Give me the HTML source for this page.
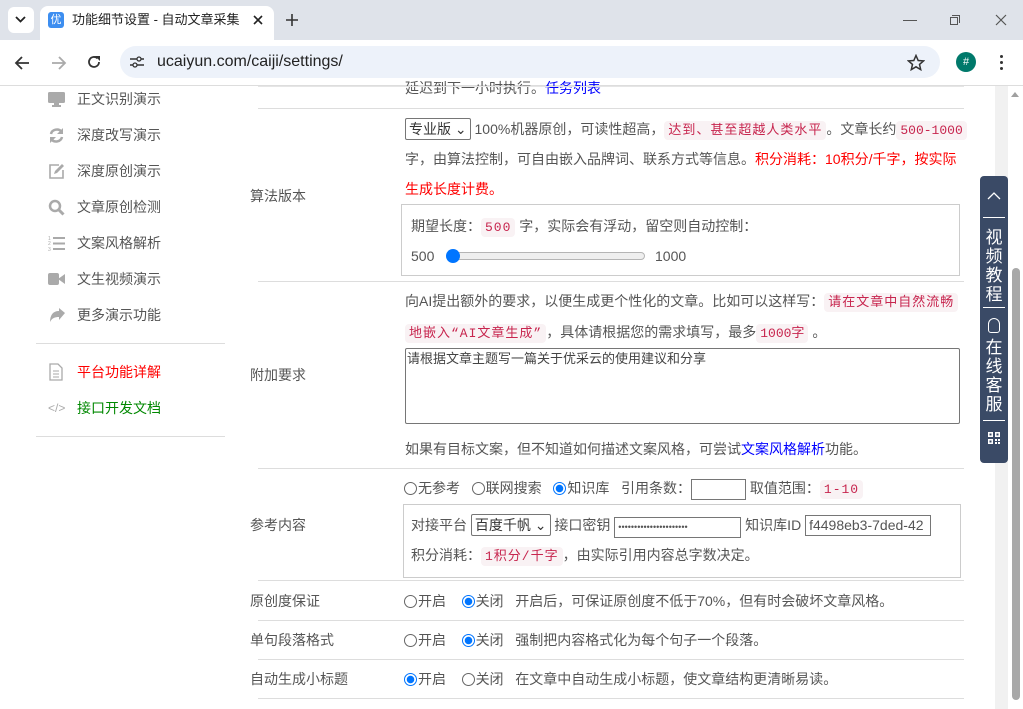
<!DOCTYPE html>
<html><head><meta charset="utf-8"><style>
*{margin:0;padding:0;box-sizing:border-box}
body{width:1023px;height:709px;overflow:hidden;position:relative;font-family:"Liberation Sans","Noto Sans CJK SC",sans-serif;font-size:14px;color:#555;background:#fff}
.abs{position:absolute}
.tabbar{left:0;top:0;width:1023px;height:40px;background:#dfe3ea}
.tab{left:40px;top:6px;width:234px;height:34px;background:#fff;border-radius:8px 8px 0 0}
.toolbar{left:0;top:40px;width:1023px;height:46px;background:#fff;border-bottom:1px solid #ddd}
.url{left:120px;top:46px;width:820px;height:32px;background:#edf2fa;border-radius:16px}
.t{white-space:nowrap;line-height:20px}
.code{background:#f9f2f4;color:#c7254e;font-family:"Liberation Mono","Noto Sans CJK SC",monospace;font-size:13px;padding:2px 4px;border-radius:4px;letter-spacing:1px}
.hr{height:1px;background:#ddd}
.side{left:77px;color:#555}
.ic{left:48px;width:17px;height:17px}
.radio{display:inline-block;width:13px;height:13px;border:1px solid #666;border-radius:50%;vertical-align:-2px;margin-right:1px}
.radio.on{border:1px solid #0075ff;background:radial-gradient(circle,#0075ff 0 3.5px,#fff 4px)}
.box{border:1px solid #ccc}
input.in{border:1px solid #767676;height:21px;font-size:14px;font-family:inherit;padding:0 3px;color:#555}
.sel{display:inline-block;border:1px solid #767676;border-radius:2px;height:22px;line-height:20px;padding:0 3px;color:#333}
</style></head><body>
<div class="abs tabbar"></div>
<div class="abs" style="left:8px;top:7px;width:26px;height:26px;background:#fff;border-radius:6px"></div>
<svg class="abs" style="left:15px;top:16px" width="11" height="8"><path d="M1 1l4.5 4.5L10 1" stroke="#222" stroke-width="1.8" fill="none"/></svg>
<div class="abs tab"></div>
<div class="abs" style="left:48px;top:12px;width:16px;height:16px;background:#3d8ef0;border-radius:3px;color:#fff;font-size:11px;line-height:16px;text-align:center">优</div>
<div class="abs t" style="left:72px;top:10px;font-size:13px;color:#222;width:168px;overflow:hidden">功能细节设置 - 自动文章采集器</div>
<svg class="abs" style="left:253px;top:15px" width="10" height="10"><path d="M1 1l8 8M9 1l-8 8" stroke="#222" stroke-width="1.6"/></svg>
<svg class="abs" style="left:286px;top:14px" width="12" height="12"><path d="M6 0v12M0 6h12" stroke="#333" stroke-width="1.6"/></svg>
<div class="abs" style="left:903px;top:20px;width:14px;height:1px;background:#555"></div>
<div class="abs" style="left:950px;top:17px;width:8px;height:8px;border:1px solid #555"></div>
<div class="abs" style="left:952px;top:15px;width:8px;height:8px;border-top:1px solid #555;border-right:1px solid #555"></div>
<svg class="abs" style="left:995px;top:14px" width="12" height="12"><path d="M1 1l10 10M11 1L1 11" stroke="#555" stroke-width="1.2"/></svg>
<div class="abs toolbar"></div>
<svg class="abs" style="left:14px;top:55px" width="16" height="16"><path d="M15 8H2M8 2L2 8l6 6" stroke="#333" stroke-width="1.8" fill="none"/></svg>
<svg class="abs" style="left:51px;top:55px" width="16" height="16"><path d="M1 8h13M8 2l6 6-6 6" stroke="#aaa" stroke-width="1.8" fill="none"/></svg>
<svg class="abs" style="left:86px;top:54px" width="16" height="16"><path d="M13 8a5 5 0 1 1-1.5-3.6" stroke="#333" stroke-width="1.8" fill="none"/><path d="M9 2h5v5z" fill="#333"/></svg>
<div class="abs url"></div>
<svg class="abs" style="left:129px;top:55px" width="16" height="14"><path d="M1 4h7M12 4h3M1 10h3M8 10h7" stroke="#333" stroke-width="1.5"/><circle cx="10" cy="4" r="2" fill="none" stroke="#333" stroke-width="1.3"/><circle cx="6" cy="10" r="2" fill="none" stroke="#333" stroke-width="1.3"/></svg>
<div class="abs t" style="left:157px;top:52px;font-size:16px;color:#222">ucaiyun.com/caiji/settings/</div>
<svg class="abs" style="left:907px;top:54px" width="18" height="17"><path d="M9 1.5l2.2 5 5.3.4-4 3.5 1.2 5.2L9 12.8l-4.7 2.8 1.2-5.2-4-3.5 5.3-.4z" fill="none" stroke="#333" stroke-width="1.5"/></svg>
<div class="abs" style="left:956px;top:52px;width:20px;height:20px;border-radius:50%;background:#00796b;color:#fff;font-size:11px;text-align:center;line-height:20px">#</div>
<div class="abs" style="left:1000px;top:55px;width:3px;height:3px;border-radius:50%;background:#333;box-shadow:0 6px #333,0 12px #333"></div>

<!-- side -->
<div class="abs" style="left:995px;top:86px;width:13px;height:623px;background:#f1f1f1"></div>
<div class="abs" style="left:1008px;top:86px;width:15px;height:623px;background:#fff"></div>
<div class="abs" style="left:1012px;top:268px;width:8px;height:432px;background:#a8a8a8;border-radius:4px"></div>
<div class="abs" style="left:1011px;top:92px;border-bottom:5px solid #a0a0a0;border-left:4px solid transparent;border-right:4px solid transparent"></div>

<svg class="abs ic" style="top:91px"><rect x="0" y="1" width="17" height="11" rx="1.5" fill="#aaa"/><rect x="6" y="12" width="5" height="2" fill="#aaa"/><rect x="4" y="14" width="9" height="2" fill="#aaa"/></svg><div class="abs t side" style="top:89px">正文识别演示</div>
<svg class="abs ic" style="top:127px"><path d="M3 7a6 5.5 0 0 1 10.5-2.5M14 10a6 5.5 0 0 1-10.5 2.5" stroke="#aaa" stroke-width="2.5" fill="none"/><path d="M15 1v6h-6zM2 16v-6h6z" fill="#aaa"/></svg><div class="abs t side" style="top:125px">深度改写演示</div>
<svg class="abs ic" style="top:163px"><path d="M11 2H2v13h13V7" stroke="#aaa" stroke-width="1.6" fill="none"/><path d="M14 1l2 2-7 7-3 1 1-3z" fill="#aaa"/></svg><div class="abs t side" style="top:161px">深度原创演示</div>
<svg class="abs ic" style="top:199px"><circle cx="7" cy="7" r="5" stroke="#aaa" stroke-width="2.5" fill="none"/><path d="M10.5 10.5l5 5" stroke="#aaa" stroke-width="3"/></svg><div class="abs t side" style="top:197px">文章原创检测</div>
<svg class="abs ic" style="top:235px"><path d="M5 3h12M5 8.5h12M5 14h12" stroke="#aaa" stroke-width="2"/><text x="0" y="5" font-size="5" fill="#aaa">1</text><text x="0" y="10" font-size="5" fill="#aaa">2</text><text x="0" y="16" font-size="5" fill="#aaa">3</text></svg><div class="abs t side" style="top:233px">文案风格解析</div>
<svg class="abs ic" style="top:271px"><rect x="0" y="2" width="11" height="12" rx="2" fill="#aaa"/><path d="M10 8l7-5v10z" fill="#aaa"/></svg><div class="abs t side" style="top:269px">文生视频演示</div>
<svg class="abs ic" style="top:307px"><path d="M17 6l-6-5v3C5 4 2 8 2 15c2-4 5-5 9-5v3z" fill="#aaa"/></svg><div class="abs t side" style="top:305px">更多演示功能</div>
<div class="abs hr" style="left:36px;top:343px;width:189px"></div>
<svg class="abs ic" style="top:363px;height:18px"><path d="M2 1h8l4 4v12H2z" stroke="#aaa" stroke-width="1.3" fill="none"/><path d="M5 8h6M5 11h6M5 14h6" stroke="#aaa"/></svg><div class="abs t side" style="top:362px;color:#f00">平台功能详解</div>
<div class="abs t" style="left:48px;top:398px;font-size:12px;color:#aaa">&lt;/&gt;</div><div class="abs t side" style="top:398px;color:#080">接口开发文档</div>
<div class="abs hr" style="left:36px;top:436px;width:189px"></div>

<!-- main -->
<div class="abs t" style="left:405px;top:78px">延迟到下一小时执行。<span style="color:#00f">任务列表</span></div>
<div class="abs hr" style="left:258px;top:86px;width:706px;background:#e5e5e5"></div>
<div class="abs hr" style="left:258px;top:108px;width:706px"></div>
<div class="abs t" style="left:250px;top:186px">算法版本</div>
<div class="abs t" style="left:405px;top:118px"><span class="sel">专业版 ⌄</span> 100%机器原创，可读性超高，<span class="code">达到、甚至超越人类水平</span>。文章长约<span class="code" style="letter-spacing:0">500-1000</span></div>
<div class="abs t" style="left:405px;top:149px">字，由算法控制，可自由嵌入品牌词、联系方式等信息。<span style="color:#f00">积分消耗：10积分/千字，按实际</span></div>
<div class="abs t" style="left:405px;top:179px;color:#f00">生成长度计费。</div>
<div class="abs box" style="left:401px;top:204px;width:559px;height:72px"></div>
<div class="abs t" style="left:411px;top:216px">期望长度：<span class="code">500</span> 字，实际会有浮动，留空则自动控制：</div>
<div class="abs t" style="left:411px;top:246px">500</div>
<div class="abs" style="left:447px;top:252px;width:198px;height:8px;border:1px solid #b5b5b5;background:#efefef;border-radius:4px"></div>
<div class="abs" style="left:446px;top:249px;width:14px;height:14px;background:#0075ff;border-radius:50%"></div>
<div class="abs t" style="left:655px;top:246px">1000</div>
<div class="abs hr" style="left:258px;top:281px;width:706px"></div>

<div class="abs t" style="left:250px;top:365px">附加要求</div>
<div class="abs t" style="left:405px;top:291px">向AI提出额外的要求，以便生成更个性化的文章。比如可以这样写：<span class="code">请在文章中自然流畅</span></div>
<div class="abs t" style="left:405px;top:322px"><span class="code">地嵌入“AI文章生成”</span>，具体请根据您的需求填写，最多<span class="code" style="letter-spacing:0">1000字</span> 。</div>
<div class="abs" style="left:405px;top:348px;width:555px;height:76px;border:1px solid #767676;border-radius:2px"></div>
<div class="abs t" style="left:407px;top:349px;font-size:13px;color:#444">请根据文章主题写一篇关于优采云的使用建议和分享</div>
<div class="abs t" style="left:405px;top:439px">如果有目标文案，但不知道如何描述文案风格，可尝试<span style="color:#00f">文案风格解析</span>功能。</div>
<div class="abs hr" style="left:258px;top:468px;width:706px"></div>

<div class="abs t" style="left:250px;top:515px">参考内容</div>
<div class="abs t" style="left:404px;top:478px"><span class="radio"></span>无参考 &nbsp;&nbsp;<span class="radio"></span>联网搜索 &nbsp;&nbsp;<span class="radio on"></span>知识库 &nbsp;&nbsp;引用条数：<input class="in" style="width:55px;vertical-align:-1px"> 取值范围：<span class="code">1-10</span></div>
<div class="abs box" style="left:403px;top:504px;width:558px;height:74px"></div>
<div class="abs t" style="left:411px;top:514px">对接平台 <span class="sel">百度千帆 ⌄</span> 接口密钥 <input class="in" value="••••••••••••••••••••••" style="width:127px;font-size:9px"> 知识库ID <input class="in" value="f4498eb3-7ded-42" style="width:126px"></div>
<div class="abs t" style="left:411px;top:545px">积分消耗：<span class="code">1积分/千字</span>，由实际引用内容总字数决定。</div>
<div class="abs hr" style="left:258px;top:580px;width:706px"></div>

<div class="abs t" style="left:250px;top:591px">原创度保证</div>
<div class="abs t" style="left:404px;top:591px"><span class="radio"></span>开启 &nbsp;&nbsp;&nbsp;<span class="radio on"></span>关闭 &nbsp;&nbsp;开启后，可保证原创度不低于70%，但有时会破坏文章风格。</div>
<div class="abs hr" style="left:258px;top:620px;width:706px"></div>
<div class="abs t" style="left:250px;top:630px">单句段落格式</div>
<div class="abs t" style="left:404px;top:630px"><span class="radio"></span>开启 &nbsp;&nbsp;&nbsp;<span class="radio on"></span>关闭 &nbsp;&nbsp;强制把内容格式化为每个句子一个段落。</div>
<div class="abs hr" style="left:258px;top:659px;width:706px"></div>
<div class="abs t" style="left:250px;top:669px">自动生成小标题</div>
<div class="abs t" style="left:404px;top:669px"><span class="radio on"></span>开启 &nbsp;&nbsp;&nbsp;<span class="radio"></span>关闭 &nbsp;&nbsp;在文章中自动生成小标题，使文章结构更清晰易读。</div>
<div class="abs hr" style="left:258px;top:698px;width:706px"></div>

<!-- float panel -->
<div class="abs" style="left:980px;top:176px;width:28px;height:287px;background:#3a4a66;border-radius:4px"></div>
<svg class="abs" style="left:987px;top:192px" width="14" height="8"><path d="M1 7l6-6 6 6" stroke="#fff" stroke-width="1.3" fill="none"/></svg>
<div class="abs" style="left:983px;top:217px;width:22px;height:1px;background:#fff"></div>
<div class="abs" style="left:985px;top:228px;width:18px;color:#fff;font-size:17px;line-height:19px;text-align:center">视频教程</div>
<div class="abs" style="left:983px;top:307px;width:22px;height:1px;background:#fff"></div>
<div class="abs" style="left:988px;top:318px;width:12px;height:15px;border:1.5px solid #fff;border-radius:6px 6px 3px 3px"></div>
<div class="abs" style="left:985px;top:338px;width:18px;color:#fff;font-size:17px;line-height:19px;text-align:center">在线客服</div>
<div class="abs" style="left:983px;top:420px;width:22px;height:1px;background:#fff"></div>
<svg class="abs" style="left:988px;top:432px" width="12" height="12"><path d="M0 0h5v5H0zM7 0h5v5H7zM0 7h5v5H0zM7 7h2v2H7zM10 10h2v2h-2zM10 7h2v2h-2zM7 10h2v2H7z" fill="#fff"/><path d="M1.5 1.5h2v2h-2zM8.5 1.5h2v2h-2zM1.5 8.5h2v2h-2z" fill="#3a4a66"/></svg>
</body></html>
